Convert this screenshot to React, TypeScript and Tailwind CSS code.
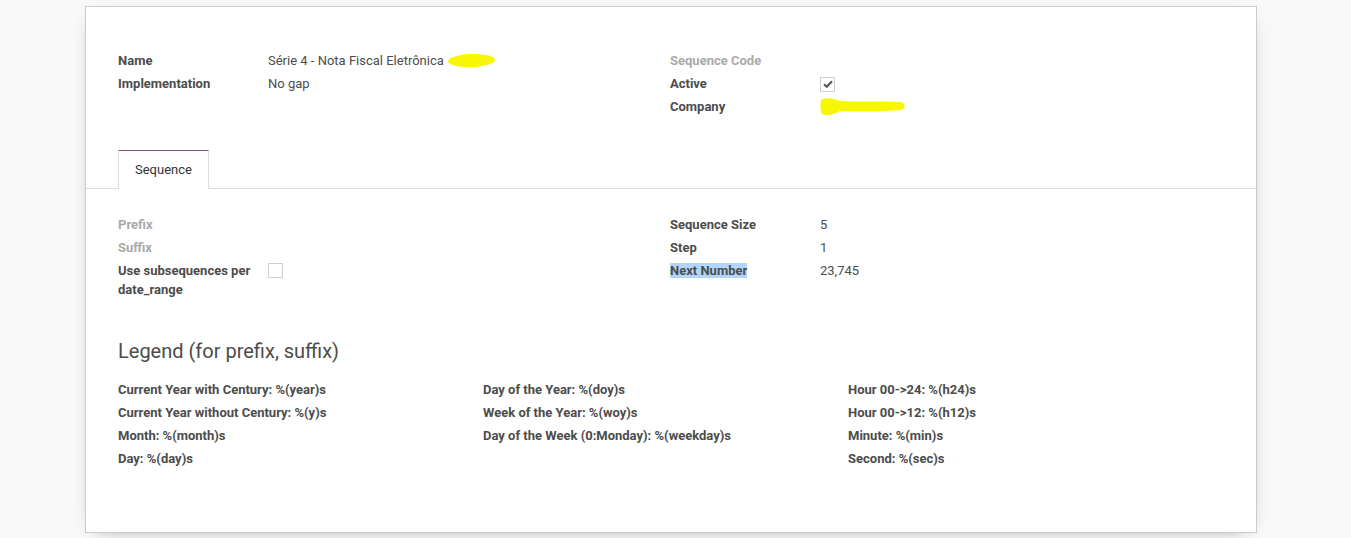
import React from "react";

const font = { fontFamily: "Roboto, 'Noto Sans', sans-serif" };

type Field = { label: string; value?: React.ReactNode; muted?: boolean; highlight?: boolean };

function Row({ label, value, muted, highlight }: Field) {
  return (
    <div className="flex">
      <div className="w-[150px] shrink-0 py-[2px] pr-4 leading-[19px]">
        <span
          className={`font-bold ${muted ? "text-[#aaaaaa]" : "text-[#4c4c4c]"} ${
            highlight ? "bg-[#b2d5fc]" : ""
          }`}
        >
          {label}
        </span>
      </div>
      <div className="flex-1 py-[2px] leading-[19px] text-[#4c4c4c]">{value}</div>
    </div>
  );
}

function CheckBox({ checked }: { checked?: boolean }) {
  return (
    <span className="mt-[2px] inline-flex h-[15px] w-[15px] items-center justify-center border border-[#cfcfcf] bg-white">
      {checked && (
        <svg width="10" height="8" viewBox="0 0 10 8">
          <path d="M1 4.2 L3.8 6.8 L9 1.3" fill="none" stroke="#555" strokeWidth="2" />
        </svg>
      )}
    </span>
  );
}

function CompanyBlob() {
  return (
    <svg width="86" height="18" viewBox="0 0 86 18" className="block">
      <path
        d="M1 2 C4 -1 14 0 20 3 C36 4 60 3 80 4 C86 5 86 10 81 12 C60 14 38 13 20 13 C14 17 6 18 2 16 C0 11 0 6 1 2 Z"
        fill="#f7f700"
      />
    </svg>
  );
}

const legend = [
  [
    "Current Year with Century: %(year)s",
    "Current Year without Century: %(y)s",
    "Month: %(month)s",
    "Day: %(day)s",
  ],
  ["Day of the Year: %(doy)s", "Week of the Year: %(woy)s", "Day of the Week (0:Monday): %(weekday)s"],
  ["Hour 00->24: %(h24)s", "Hour 00->12: %(h12)s", "Minute: %(min)s", "Second: %(sec)s"],
];

export default function App() {
  return (
    <div className="min-h-[538px] bg-[#f9f9f9] pl-[85px] pt-[6px] text-[13px]" style={font}>
      <div className="w-[1172px] border border-[#cccccc] bg-white px-[32px] pb-[62px] pt-[42px] shadow-[0_5px_20px_-12px_rgba(0,0,0,0.5)]">
        {/* Header groups */}
        <div className="flex">
          <div className="w-[552px]">
            <Row
              label="Name"
              value={
                <span className="inline-flex items-center">
                  Série 4 - Nota Fiscal Eletrônica
                  <span className="ml-[4px] inline-block h-[13px] w-[47px] -rotate-2 rounded-[50%] bg-[#f7f700]" />
                </span>
              }
            />
            <Row label="Implementation" value="No gap" />
          </div>
          <div className="w-[552px]">
            <Row label="Sequence Code" muted />
            <Row label="Active" value={<CheckBox checked />} />
            <Row label="Company" value={<span className="inline-block pt-[1px]"><CompanyBlob /></span>} />
          </div>
        </div>

        {/* Tabs */}
        <div className="-mx-[32px] mt-[27px] flex border-b border-[#dddddd] px-[32px]">
          <div className="-mb-px border-x border-t border-x-[#dddddd] border-t-[#875a7b] bg-white px-[16px] pb-[11px] pt-[10px] leading-[17px] text-[#333333]">
            Sequence
          </div>
        </div>

        {/* Tab content */}
        <div className="mt-[24px] flex">
          <div className="w-[552px]">
            <Row label="Prefix" muted />
            <Row label="Suffix" muted />
            <Row label="Use subsequences per date_range" value={<CheckBox />} />
          </div>
          <div className="w-[552px]">
            <Row label="Sequence Size" value="5" />
            <Row label="Step" value="1" />
            <Row label="Next Number" value="23,745" highlight />
          </div>
        </div>

        <h3 className="mt-[37px] text-[20px] leading-[26px] text-[#4c4c4c]">Legend (for prefix, suffix)</h3>

        <div className="mt-[14px] flex">
          {legend.map((col, i) => (
            <div key={i} className="w-[365px]">
              {col.map((t) => (
                <div key={t} className="py-[2px] font-bold leading-[19px] text-[#4c4c4c]">
                  {t}
                </div>
              ))}
            </div>
          ))}
        </div>
      </div>
    </div>
  );
}
